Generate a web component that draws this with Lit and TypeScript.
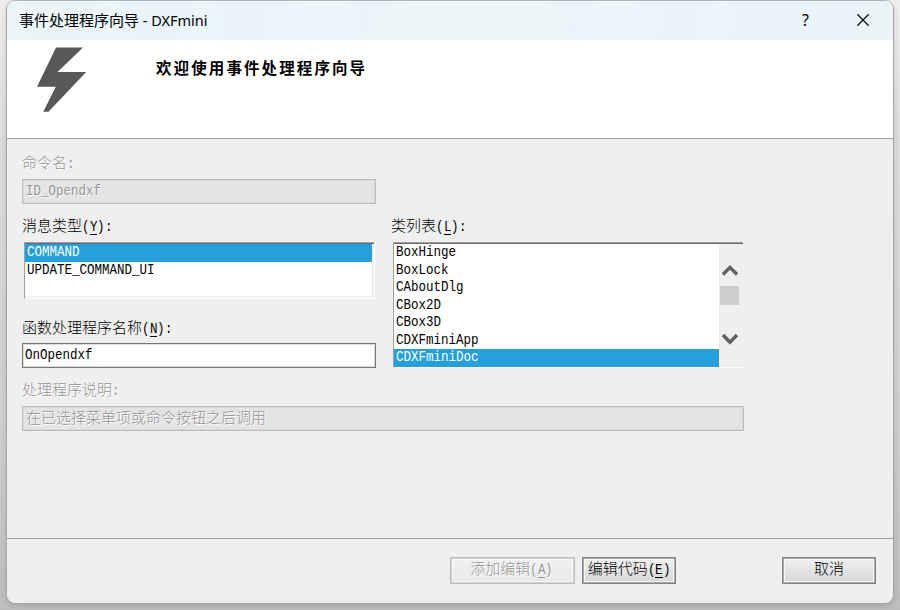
import { LitElement, html, css } from "lit";
import { customElement, property, state } from "lit/decorators.js";
import { classMap } from "lit/directives/class-map.js";

const CLASSES = ["BoxHinge", "BoxLock", "CAboutDlg", "CBox2D", "CBox3D", "CDXFminiApp", "CDXFminiDoc"];
const MESSAGES = ["COMMAND", "UPDATE_COMMAND_UI"];

/* Half-width monospaced run: every cell is half of a CJK cell. */
@customElement("half-text")
class HalfText extends LitElement {
  @property() text = "";
  static styles = css`
    :host { display: inline-block; vertical-align: top; height: inherit; }
    .glyph { display: inline-block; transform: scaleX(0.8333); transform-origin: left; font-family: "Liberation Mono", monospace; }
  `;
  render() {
    return html`<span class="glyph">${this.text}</span>`;
  }
  updated() {
    this.style.width = `${this.text.length * 7.5}px`;
    this.style.whiteSpace = "pre";
  }
}

@customElement("field-label")
class FieldLabel extends LitElement {
  @property() text = "";
  @property() key = "";
  @property() tail = "";
  @property({ type: Boolean }) disabled = false;
  static styles = css`
    :host { display: block; height: 20px; line-height: 18px; font-size: 15px; white-space: nowrap; }
    .disabled { color: #959595; text-shadow: 1px 1px 0 #fff; }
    .row { display: flex; }
    .key { box-shadow: inset 0 -1px 0 currentColor; height: 19px; }
  `;
  render() {
    return html`<div class=${classMap({ row: true, disabled: this.disabled })}>
      <span>${this.text}</span>${this.key
        ? html`<half-text text="("></half-text><half-text class="key" text=${this.key}></half-text><half-text text=")"></half-text>`
        : ""}${this.tail ? html`<half-text text=${this.tail}></half-text>` : ""}
    </div>`;
  }
}

@customElement("app-root")
class AppRoot extends LitElement {
  @state() message = MESSAGES[0];
  @state() cls = "CDXFminiDoc";

  static styles = css`
    :host {
      display: block; box-sizing: border-box; width: 900px; height: 610px; overflow: hidden;
      padding: 0 6px; font-size: 15px; color: #000; font-weight: 300;
      font-family: "Noto Sans CJK SC", sans-serif;
      background: linear-gradient(#efefef 0, #dedede 20%, #cfcfcf 70%, #bdbdbd 100%);
    }
    .window {
      box-sizing: border-box; width: 888px; height: 604px; display: flex; flex-direction: column;
      border: 1px solid #a5a5a5; border-top-color: #b4b4b4; border-radius: 9px; overflow: hidden; background: #efefef;
      box-shadow: 0 2px 6px rgba(0, 0, 0, 0.12);
    }
    .title {
      height: 39px; flex: none; display: flex; align-items: center; padding: 0 23px 0 12px; box-sizing: border-box;
      background: linear-gradient(100deg, #eaf5f7, #ebf3fb 22%, #eaf5f8 45%, #eaf5f8 60%, #ebf3fb 80%, #e9f4f7);
      font-weight: 400;
    }
    .caption { flex: 1; font-size: 15px; line-height: 37px; margin-top: -2px; white-space: pre; }
    .latin { font-family: "Noto Sans", sans-serif; font-size: 14.5px; letter-spacing: 0; }
    .help { font: 16px/38px "Noto Sans", sans-serif; margin: -1px 47px 0 0; }
    .close { display: block; margin-top: -1px; }
    .header { height: 98px; flex: none; background: #fff; border-bottom: 1px solid #a0a0a0; display: flex; }
    .bolt { margin: 6px 0 0 29px; width: 52px; height: 68px; flex: none; }
    .welcome { margin: 16px 0 0 68px; font-size: 15.5px; line-height: 22px; font-weight: 700; letter-spacing: 2.1px; }
    .body { flex: 1; padding: 14px 0 0 15px; }
    .columns { display: flex; gap: 15px; }
    .left { width: 354px; }
    .input {
      box-sizing: border-box; height: 25px; border: 1px solid #777; background: #fff; padding-left: 2px;
      line-height: 18px; box-shadow: inset -1px -1px 0 #ddd, inset 1px 1px 0 #ddd; white-space: nowrap;
    }
    .input.off {
      color: #959595; background: #e4e4e4; border-color: #bcbcbc; text-shadow: 1px 1px 0 #fff; padding-left: 3px;
      box-shadow: inset -1px -1px 0 #d9d9d9, inset 1px 1px 0 #d9d9d9;
    }
    .name { margin-top: 6px; }
    .label2 { margin-top: 12px; }
    .list {
      box-sizing: border-box; margin-left: 2px; background: #fff; border-left: 1px solid #a0a0a0;
      border-top: 1px solid #a0a0a0; box-shadow: inset 0 1px 0 #696969; padding-top: 1px;
    }
    .messages { width: 351px; height: 57px; margin-top: 6px; border-right: 1px solid #fff; border-bottom: 1px solid #fff;
      box-shadow: inset 0 1px 0 #696969, inset -2px -2px 0 #efefef; padding-right: 2px; }
    .item { height: 17.5px; line-height: 12px; padding-left: 2px; }
    .item half-text { height: 17px; }
    .sel { background: #26a0da; color: #fff; }
    .label3 { margin-top: 19px; }
    .func { margin-top: 5px; }
    .right { margin-top: 63px; }
    .classes { width: 350px; height: 126px; margin-top: 6px; display: flex; border-bottom: 1px solid #fff; }
    .names { flex: 1; box-shadow: inset 0 -2px 0 #efefef; }
    .bar { width: 24px; background: #efefef; display: flex; flex-direction: column; }
    .bar svg { display: block; margin-left: 3px; }
    .up { margin-top: 20px; }
    .thumb { width: 19px; height: 19px; background: #cdcdcd; margin: 9px 0 28px 1px; }
    .label4 { margin-top: 12px; }
    .desc { width: 722px; margin-top: 6px; line-height: 19px; }
    .footer { height: 65px; flex: none; box-sizing: border-box; border-top: 1px solid #a0a0a0; display: flex; padding: 18px 17px 0 443px; }
    .btn {
      box-sizing: border-box; height: 27px; border: 1px solid #858585; display: flex; justify-content: center;
      background: linear-gradient(#f0f0f0, #e4e4e4 50%, #d5d5d5); box-shadow: inset 0 0 0 1px #a8a8a8, inset 0 0 0 2px #f6f6f6; padding-top: 1px;
    }
    .btn.off { border-color: #bcbcbc; background: linear-gradient(#f1f1f1, #e9e9e9); box-shadow: inset 0 0 0 1px #d3d3d3, inset 0 0 0 2px #f5f5f5; }
    .add { width: 125px; padding-right: 2px; }
    .edit { width: 94px; margin-left: 7px; }
    .cancel { width: 94px; margin-left: auto; }
  `;

  render() {
    return html`
      <div class="window">
        <div class="title">
          <div class="caption">事件处理程序向导<span class="latin"> - DXFmini</span></div>
          <div class="help">?</div>
          <svg class="close" width="14" height="14" viewBox="0 0 14 14"><path d="M1.3 1.3 12.7 12.7M12.7 1.3 1.3 12.7" stroke="#111" stroke-width="1.3" fill="none"/></svg>
        </div>
        <div class="header">
          <svg class="bolt" viewBox="36 46 52 68"><path d="M56 47.4H83L57.5 72H86.2L48.5 111.8H43.3L55.8 86.8H37Z" fill="#58585a"/></svg>
          <div class="welcome">欢迎使用事件处理程序向导</div>
        </div>
        <div class="body">
          <div class="columns">
            <div class="left">
              <field-label text="命令名" tail=":" disabled></field-label>
              <div class="input off name"><half-text text="ID_Opendxf"></half-text></div>
              <field-label class="label2" text="消息类型" key="Y" tail=":"></field-label>
              <div class="list messages">
                ${MESSAGES.map((m) => html`<div class=${classMap({ item: true, sel: m === this.message })} @click=${() => (this.message = m)}><half-text text=${m}></half-text></div>`)}
              </div>
              <field-label class="label3" text="函数处理程序名称" key="N" tail=":"></field-label>
              <div class="input func"><half-text text="OnOpendxf"></half-text></div>
            </div>
            <div class="right">
              <field-label text="类列表" key="L" tail=":"></field-label>
              <div class="list classes">
                <div class="names">
                  ${CLASSES.map((c) => html`<div class=${classMap({ item: true, sel: c === this.cls })} @click=${() => (this.cls = c)}><half-text text=${c}></half-text></div>`)}
                </div>
                <div class="bar">
                  <svg class="up" width="16" height="13" viewBox="0 0 16 13"><path d="M1 10.5 8 3.4 15 10.5" stroke="#606060" stroke-width="3.4" fill="none"/></svg>
                  <div class="thumb"></div>
                  <svg width="16" height="13" viewBox="0 0 16 13"><path d="M1 2 8 9.2 15 2" stroke="#606060" stroke-width="3.4" fill="none"/></svg>
                </div>
              </div>
            </div>
          </div>
          <field-label class="label4" text="处理程序说明" tail=":" disabled></field-label>
          <div class="input off desc">在已选择菜单项或命令按钮之后调用</div>
        </div>
        <div class="footer">
          <div class="btn off add"><field-label text="添加编辑" key="A" disabled></field-label></div>
          <div class="btn edit"><field-label text="编辑代码" key="E"></field-label></div>
          <div class="btn cancel"><field-label text="取消"></field-label></div>
        </div>
      </div>
    `;
  }
}
